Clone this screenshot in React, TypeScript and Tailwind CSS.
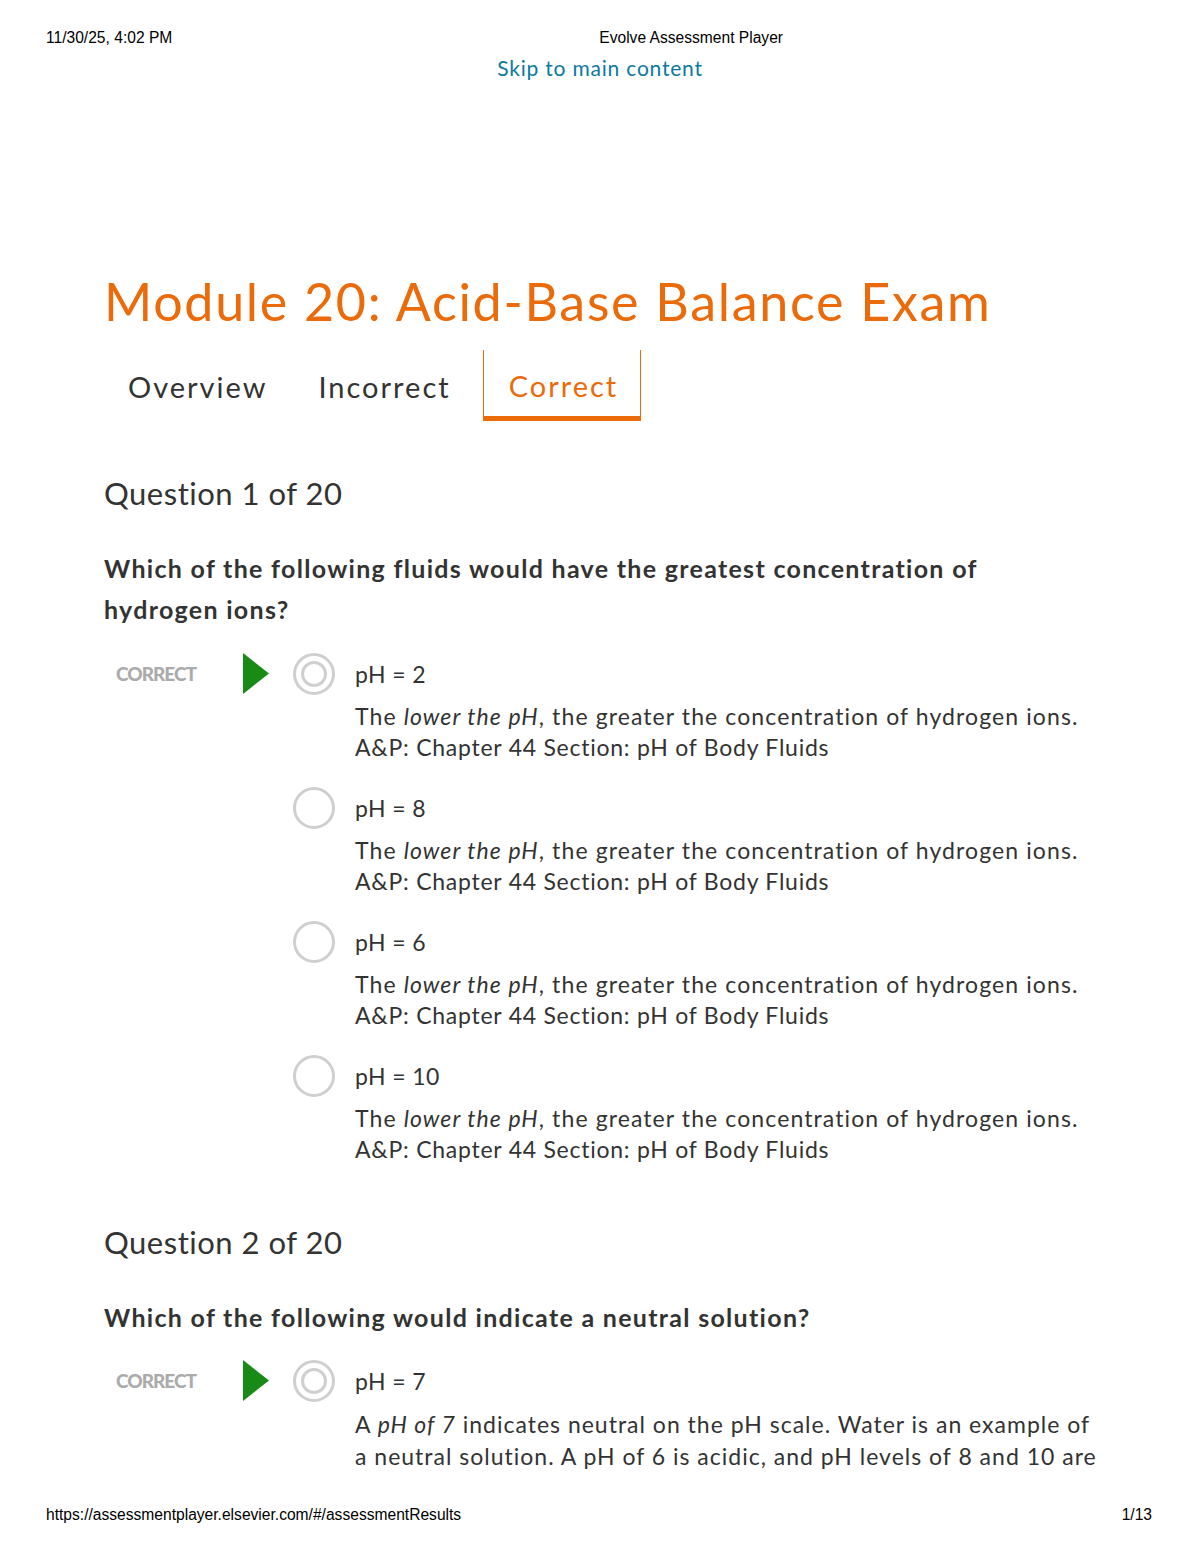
import React from "react";

const body = { fontFamily: "Lato, 'Open Sans', sans-serif" };

function Radio({ selected }: { selected?: boolean }) {
  return (
    <div className="w-[42px] h-[42px] rounded-full border-[3px] border-[#cfcfcf] flex items-center justify-center shrink-0">
      {selected && <div className="w-[26px] h-[26px] rounded-full border-[3px] border-[#cfcfcf]" />}
    </div>
  );
}

function Answer({
  correct,
  label,
  children,
}: {
  correct?: boolean;
  label: string;
  children: React.ReactNode;
}) {
  return (
    <div className="flex items-start">
      <div className="w-[139px] shrink-0 flex items-center h-[42px] pl-[12px]">
        {correct && (
          <span className="text-[19px] font-black text-[#ababab] tracking-[-1px]" style={{ fontFamily: "Lato, sans-serif" }}>
            CORRECT
          </span>
        )}
      </div>
      <div className="w-[50px] shrink-0 h-[42px] flex items-center">
        {correct && (
          <svg width="26" height="41" viewBox="0 0 26 41" className="-mt-[1px]">
            <polygon points="0,0 26,20.5 0,41" fill="#1a8a17" />
          </svg>
        )}
      </div>
      <Radio selected={correct} />
      <div className="ml-[20px] w-[745px]">
        <div className="h-[42px] flex items-center text-[23px] text-[#333] tracking-[0.4px]">{label}</div>
        <div className="mt-[6px] text-[23px] leading-[31px] text-[#333] tracking-[1.1px]">{children}</div>
      </div>
    </div>
  );
}

function Feedback1() {
  return (
    <>
      <div>
        The <i>lower the pH</i>, the greater the concentration of hydrogen ions.
      </div>
      <div className="tracking-[0.75px]">A&amp;P: Chapter 44 Section: pH of Body Fluids</div>
    </>
  );
}

export default function App() {
  return (
    <div className="w-[1200px] h-[1553px] bg-white relative" style={body}>
      <div
        className="flex pt-[30px] text-[15.6px] leading-[16px] text-black"
        style={{ fontFamily: "'Liberation Sans', Arial, sans-serif" }}
      >
        <span className="ml-[46px]">11/30/25, 4:02 PM</span>
        <span className="ml-[427px]">Evolve Assessment Player</span>
      </div>
      <div className="mt-[10px] text-center text-[21px] leading-[24px] text-[#0a7aa3] tracking-[0.8px]">
        Skip to main content
      </div>

      <div className="pl-[104px]">
        <h1 className="mt-[191px] text-[52px] leading-[60px] text-[#eb6a0a] tracking-[1.7px]">
          Module 20: Acid-Base Balance Exam
        </h1>

        <div className="mt-[19px] flex items-end text-[29px] text-[#333] tracking-[2px]">
          <div className="h-[71px] pl-[24px] pr-[28px] flex items-center pt-[3px]">Overview</div>
          <div className="h-[71px] pl-[23px] pr-[32px] flex items-center pt-[3px]">Incorrect</div>
          <div className="h-[71px] pl-[25px] pr-[22px] flex items-center pt-[5px] border-x border-b-[5px] border-[#eb6a0a] text-[#eb6a0a]">
            Correct
          </div>
        </div>

        <h2 className="mt-[52px] text-[31px] leading-[40px] text-[#333] tracking-[0.5px]">Question 1 of 20</h2>
        <p className="mt-[35px] text-[25px] leading-[41px] font-bold text-[#333] w-[900px] tracking-[1.3px]">
          Which of the following fluids would have the greatest concentration of hydrogen ions?
        </p>

        <div className="mt-[23px] flex flex-col gap-[24px]">
          <Answer correct label="pH = 2">
            <Feedback1 />
          </Answer>
          <Answer label="pH = 8">
            <Feedback1 />
          </Answer>
          <Answer label="pH = 6">
            <Feedback1 />
          </Answer>
          <Answer label="pH = 10">
            <Feedback1 />
          </Answer>
        </div>

        <h2 className="mt-[57px] text-[31px] leading-[40px] text-[#333] tracking-[0.5px]">Question 2 of 20</h2>
        <p className="mt-[35px] text-[25px] leading-[41px] font-bold text-[#333] w-[900px] tracking-[1.3px]">
          Which of the following would indicate a neutral solution?
        </p>
        <div className="mt-[22px]">
          <Answer correct label="pH = 7">
            <div className="mt-[4px] leading-[32px] tracking-[1px]">
              A <i>pH of 7</i> indicates neutral on the pH scale. Water is an example of a neutral solution. A pH of 6 is
              acidic, and pH levels of 8 and 10 are
            </div>
          </Answer>
        </div>
      </div>

      <div
        className="absolute left-0 right-0 top-[1507px] flex justify-between pl-[46px] pr-[48px] text-[15.6px] leading-[16px] text-black"
        style={{ fontFamily: "'Liberation Sans', Arial, sans-serif" }}
      >
        <span>https://assessmentplayer.elsevier.com/#/assessmentResults</span>
        <span>1/13</span>
      </div>
    </div>
  );
}
